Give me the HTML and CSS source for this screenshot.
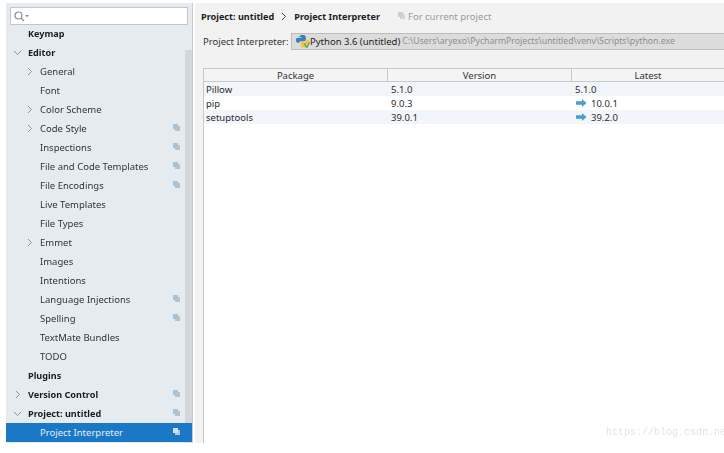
FILE: index.html
```html
<!DOCTYPE html>
<html lang="en">
<head>
    <meta charset="UTF-8">
    <meta name="viewport" content="width=device-width, initial-scale=1.0">
    <title>Settings</title>
    <link rel="stylesheet" href="styles.css">
</head>
<body>
    <div class="window">
        <div class="sidebar">
            <div class="search">
                <svg class="search-icon" width="15" height="11" viewBox="0 0 15 11"><circle cx="4.5" cy="4.5" r="3.5" fill="none" stroke="#8a8f94" stroke-width="1.2"/><path d="M7 7l3 3" stroke="#8a8f94" stroke-width="1.3"/><path d="M11 4h4l-2 2.2z" fill="#8a8f94"/></svg>
            </div>
            <div class="tree-wrap">
                <div class="scrollbar"></div>
                <div class="tree">
                    <div class="row bold lvl0"><span class="label">Keymap</span></div>
                    <div class="row bold lvl0"><svg class="arrow" width="9" height="9" viewBox="0 0 9 9"><path d="M1 3l3.5 3.5L8 3" /></svg><span class="label">Editor</span></div>
                    <div class="row lvl1"><svg class="arrow" width="9" height="9" viewBox="0 0 9 9"><path d="M3 1l3.5 3.5L3 8" /></svg><span class="label">General</span></div>
                    <div class="row lvl1"><span class="label">Font</span></div>
                    <div class="row lvl1"><svg class="arrow" width="9" height="9" viewBox="0 0 9 9"><path d="M3 1l3.5 3.5L3 8" /></svg><span class="label">Color Scheme</span></div>
                    <div class="row lvl1"><svg class="arrow" width="9" height="9" viewBox="0 0 9 9"><path d="M3 1l3.5 3.5L3 8" /></svg><span class="label">Code Style</span><span class="copy"></span></div>
                    <div class="row lvl1"><span class="label">Inspections</span><span class="copy"></span></div>
                    <div class="row lvl1"><span class="label">File and Code Templates</span><span class="copy"></span></div>
                    <div class="row lvl1"><span class="label">File Encodings</span><span class="copy"></span></div>
                    <div class="row lvl1"><span class="label">Live Templates</span></div>
                    <div class="row lvl1"><span class="label">File Types</span></div>
                    <div class="row lvl1"><svg class="arrow" width="9" height="9" viewBox="0 0 9 9"><path d="M3 1l3.5 3.5L3 8" /></svg><span class="label">Emmet</span></div>
                    <div class="row lvl1"><span class="label">Images</span></div>
                    <div class="row lvl1"><span class="label">Intentions</span></div>
                    <div class="row lvl1"><span class="label">Language Injections</span><span class="copy"></span></div>
                    <div class="row lvl1"><span class="label">Spelling</span><span class="copy"></span></div>
                    <div class="row lvl1"><span class="label">TextMate Bundles</span></div>
                    <div class="row lvl1"><span class="label">TODO</span></div>
                    <div class="row bold lvl0"><span class="label">Plugins</span></div>
                    <div class="row bold lvl0"><svg class="arrow" width="9" height="9" viewBox="0 0 9 9"><path d="M3 1l3.5 3.5L3 8" /></svg><span class="label">Version Control</span><span class="copy"></span></div>
                    <div class="row bold lvl0"><svg class="arrow" width="9" height="9" viewBox="0 0 9 9"><path d="M1 3l3.5 3.5L8 3" /></svg><span class="label">Project: untitled</span><span class="copy"></span></div>
                    <div class="row lvl1 selected"><span class="label">Project Interpreter</span><span class="copy"></span></div>
                </div>
            </div>
        </div>

        <div class="content">
            <div class="crumbs">
                <span class="crumb">Project: untitled</span>
                <svg class="crumb-sep" width="6" height="9" viewBox="0 0 6 9"><path d="M1 1l3.5 3.5L1 8" /></svg>
                <span class="crumb">Project Interpreter</span>
                <span class="copy for-project"></span>
                <span class="for-text">For current project</span>
            </div>
            <div class="interpreter">
                <span class="interp-label">Project Interpreter:</span>
                <div class="interp-select">
                    <svg class="py-icon" width="14" height="14" viewBox="0 0 15 15">
                        <path d="M3.500 6.500V3.500C3.500 1.500 5 1 7 1s3.500.5 3.500 2.500V6c0 1-.7 1.700-1.700 1.700H5.500C4.500 7.700 3.500 8 3.500 9.500H2C.5 9.500 0 8.200 0 6.500S.7 4 2 4h4V3.300H3.500z" fill="#3d7fb5"/>
                        <path d="M11 6h1.500C14 6 14.500 7.200 14.500 8.500c0 1.200-.5 2.500-2 2.500H8.500v.7H11V13c0 1-1.500 1.500-3 1.500S5 14 5 12.500V10c0-1 .7-1.500 1.500-1.500h3C10.500 8.500 11 8 11 6.500z" fill="#f0c53f"/>
                        <path d="M9 10l2.500 4.500L14.500 9" fill="none" stroke="#5da84a" stroke-width="1.500"/>
                    </svg>
                    <span class="interp-name">Python 3.6 (untitled)</span>
                    <span class="interp-path">C:\Users\aryexo\PycharmProjects\untitled\venv\Scripts\python.exe</span>
                </div>
            </div>
            <div class="table">
                <div class="thead">
                    <div class="th">Package</div>
                    <div class="th">Version</div>
                    <div class="th">Latest</div>
                </div>
                <div class="tr odd">
                    <div class="td">Pillow</div>
                    <div class="td">5.1.0</div>
                    <div class="td">5.1.0</div>
                </div>
                <div class="tr">
                    <div class="td">pip</div>
                    <div class="td">9.0.3</div>
                    <div class="td"><svg class="up" width="11" height="8" viewBox="0 0 13 9" preserveAspectRatio="none"><path d="M0 2.500h7V0l5.500 4.500L7 9V6.500H0z"/></svg>10.0.1</div>
                </div>
                <div class="tr odd">
                    <div class="td">setuptools</div>
                    <div class="td">39.0.1</div>
                    <div class="td"><svg class="up" width="11" height="8" viewBox="0 0 13 9" preserveAspectRatio="none"><path d="M0 2.500h7V0l5.500 4.500L7 9V6.500H0z"/></svg>39.2.0</div>
                </div>
            </div>
        </div>
    </div>
    <div class="watermark">https://blog.csdn.net</div>
</body>
</html>
```
FILE: styles.css
```css
* {
    box-sizing: border-box;
}

html, body {
    height: 100%;
}

body {
    margin: 0;
    padding-top: 3px;
    background-color: #fff;
    color: #333;
    font-family: "Noto Sans", "Open Sans", sans-serif;
    font-size: 9.5px;
    overflow: hidden;
    position: relative;
}

.window {
    display: flex;
    height: 440px;
    margin-left: 6px;
    filter: blur(0.3px);
}

.sidebar {
    width: 187px;
    background-color: #e6ebf0;
    display: flex;
    flex-direction: column;
    border-right: 1px solid #c9ccce;
}

.search {
    height: 18px;
    margin: 4px 4px 5px 4px;
    background-color: #fff;
    border: 1px solid #c4c7ca;
    display: flex;
    align-items: center;
    padding-left: 3px;
    flex-shrink: 0;
}

.tree-wrap {
    flex: 1;
    overflow: hidden;
    position: relative;
}

.scrollbar {
    position: absolute;
    top: 20px;
    right: 0;
    bottom: 0;
    width: 7px;
    background-color: #d2d7db;
}

.tree {
    position: relative;
    margin-top: -6px;
}

.row {
    height: 19px;
    display: flex;
    align-items: center;
    position: relative;
    white-space: nowrap;
}

.lvl0 {
    padding-left: 22px;
}

.lvl1 {
    padding-left: 34px;
}

.bold {
    font-weight: 700;
    font-size: 9.1px;
    color: #1c1c1c;
}

.arrow {
    position: absolute;
    fill: none;
    stroke: #8f9397;
    stroke-width: 1;
}

.lvl0 .arrow {
    left: 7px;
}

.lvl1 .arrow {
    left: 19px;
}

.copy {
    position: absolute;
    right: 12px;
    top: 7px;
    width: 5px;
    height: 5px;
    background-color: #b9c0c6;
}

.copy::before {
    content: "";
    position: absolute;
    left: -2px;
    top: -2px;
    width: 5px;
    height: 5px;
    background-color: #a4c4dc;
}

.selected {
    background-color: #1a78c6;
    color: #e4eef7;
}

.selected .copy {
    background-color: #a9cbe6;
}

.selected .copy::before {
    background-color: #d0e2f0;
}

.content {
    flex: 1;
    min-width: 0;
    margin-left: 2px;
    background-color: #f2f2f2;
    display: flex;
    flex-direction: column;
    padding-left: 6px;
}

.crumbs {
    display: flex;
    align-items: center;
    height: 26px;
}

.crumb {
    font-weight: 700;
    font-size: 9.1px;
    color: #1c1c1c;
}

.crumb-sep {
    margin: 0 7px 0 7px;
    fill: none;
    stroke: #444;
}

.copy.for-project {
    position: relative;
    right: auto;
    top: auto;
    margin-left: 20px;
    background-color: #d4d6d8;
}

.copy.for-project::before {
    background-color: #c4d2dc;
}

.for-text {
    margin-left: 3px;
    color: #9a9a9a;
}

.interpreter {
    display: flex;
    align-items: center;
    height: 18px;
    margin-top: 3px;
    padding-left: 2px;
}

.interp-label {
    width: 88px;
    white-space: nowrap;
    flex-shrink: 0;
}

.interp-select {
    flex: 1;
    min-width: 0;
    height: 17px;
    background-color: #dcdcdc;
    border: 1px solid #bdbdbd;
    border-right: none;
    display: flex;
    align-items: center;
    padding-left: 4px;
    white-space: nowrap;
    overflow: hidden;
}

.py-icon {
    flex-shrink: 0;
}

.interp-name {
    color: #222;
}

.interp-path {
    margin-left: 2px;
    font-size: 8.7px;
    color: #8f8f8f;
}

.table {
    flex: 1;
    margin-top: 18px;
    margin-left: 2px;
    background-color: #fff;
    border-left: 1px solid #c8c8c8;
    border-top: 1px solid #c8c8c8;
}

.thead {
    display: grid;
    grid-template-columns: 184px 184px 1fr;
    height: 13px;
    background-color: #f4f4f4;
    border-bottom: 1px solid #c8c8c8;
}

.th {
    display: flex;
    justify-content: center;
    align-items: center;
    border-right: 1px solid #c8c8c8;
    color: #333;
}

.th:last-child {
    border-right: none;
}

.tr {
    display: grid;
    grid-template-columns: 184px 184px 1fr;
    height: 14px;
    align-items: center;
}

.odd {
    background-color: #f2f5fa;
}

.td {
    padding-left: 3px;
    display: flex;
    align-items: center;
    color: #2b2b2b;
}

.td:first-child {
    padding-left: 2px;
}

.up {
    margin-left: 1px;
    margin-right: 4px;
    fill: #4a9fd0;
}

.watermark {
    position: absolute;
    left: 606px;
    top: 427px;
    font-family: "Liberation Mono", monospace;
    font-size: 10px;
    color: #e4e4e4;
    white-space: nowrap;
}
```
